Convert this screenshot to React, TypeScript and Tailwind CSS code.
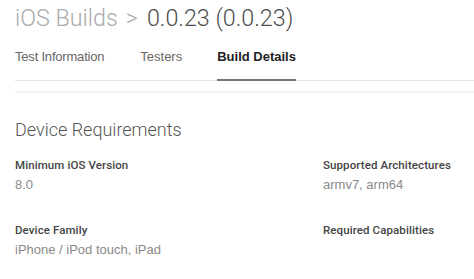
import React from "react"

const Field = ({ label, value }: { label: string; value?: string }) => {
    return (
        <div className="flex flex-col">
            <span className="font-['Roboto',sans-serif] font-medium text-[11.5px] leading-[14px] tracking-[0.1px] text-[#444]">
                {label}
            </span>
            <span className="mt-[3px] h-[20px] font-['Liberation_Sans',sans-serif] text-[13px] leading-[20px] text-[#8a8a8a]">
                {value}
            </span>
        </div>
    )
}

const App = () => {
    return (
        <div className="w-[474px] h-[279px] overflow-hidden bg-white pl-[15px] font-['Liberation_Sans',sans-serif]">
            <h1 className="pt-[4px] font-['Roboto',sans-serif] font-light text-[23.3px] leading-[28px] whitespace-nowrap">
                <span className="text-[#ababab]">iOS Builds</span>
                <span className="text-[#ababab] ml-[8px] mr-[9px]">&gt;</span>
                <span className="text-[#4d4d4d]">0.0.23 (0.0.23)</span>
            </h1>

            <nav className="mt-[17px] flex border-b border-[#e2e2e2] text-[13px] leading-[16px]">
                <div className="pb-[15px] text-[#666] tracking-[-0.2px]">Test Information</div>
                <div className="ml-[36px] pb-[15px] text-[#666]">Testers</div>
                <div className="ml-[35px] -mb-px pb-[14px] border-b-2 border-[#777] font-bold text-[#222]">
                    Build Details
                </div>
            </nav>

            <div className="mt-[10px] h-[2px] bg-[#f1f1f1]" />

            <section className="pt-[26px]">
                <h2 className="font-['Roboto',sans-serif] font-light text-[18px] leading-[22px] text-[#555]">
                    Device Requirements
                </h2>
                <div className="mt-[17px] grid grid-cols-[308px_1fr] gap-y-[28px]">
                    <Field label="Minimum iOS Version" value="8.0" />
                    <Field label="Supported Architectures" value="armv7, arm64" />
                    <Field label="Device Family" value="iPhone / iPod touch, iPad" />
                    <Field label="Required Capabilities" />
                </div>
            </section>
        </div>
    )
}

export default App
